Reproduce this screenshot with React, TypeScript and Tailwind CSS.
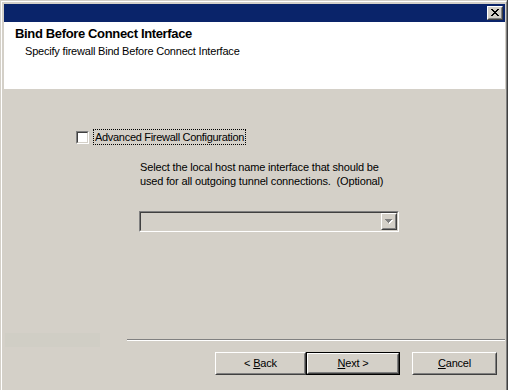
import React from 'react';

const raised = 'border border-t-white border-l-white border-b-[#404040] border-r-[#404040]';
const raisedInner = 'border border-t-[#d4d0c8] border-l-[#d4d0c8] border-b-[#808080] border-r-[#808080]';
const sunken = 'border border-t-[#808080] border-l-[#808080] border-b-white border-r-white';
const sunkenInner = 'border border-t-[#404040] border-l-[#404040] border-b-[#d4d0c8] border-r-[#d4d0c8]';

function CloseButton() {
  return (
    <div className={`w-[16px] h-[14px] bg-[#d4d0c8] ${raised}`}>
      <div className={`w-full h-full flex items-center justify-center ${raisedInner}`}>
        <svg width="8" height="7" viewBox="0 0 8 7" shapeRendering="crispEdges" className="mb-px">
          <path
            d="M0 0h2v1H0zM6 0h2v1H6zM1 1h2v1H1zM5 1h2v1H5zM2 2h4v1H2zM3 3h2v1H3zM2 4h4v1H2zM1 5h2v1H1zM5 5h2v1H5zM0 6h2v1H0zM6 6h2v1H6z"
            fill="#000"
          />
        </svg>
      </div>
    </div>
  );
}

function WizButton({ children, isDefault, width }: { children: React.ReactNode; isDefault?: boolean; width: string }) {
  const face = (
    <div className={`h-full w-full ${raised}`}>
      <div className={`h-full w-full flex items-center justify-center text-[11px] tracking-[-0.2px] ${raisedInner}`}>
        {children}
      </div>
    </div>
  );
  return (
    <div className={`${width} h-[23px] ${isDefault ? 'border border-black' : ''}`}>
      {face}
    </div>
  );
}

export default function App() {
  return (
    <div className="w-[508px] h-[390px] overflow-hidden bg-[#d4d0c8] text-black font-['Liberation_Sans',Arial,sans-serif]">
      <div className="h-full border-r border-[#404040]">
        <div className="h-full pt-px pl-px">
          <div className="h-full border-l border-t border-white border-r border-r-[#808080]">
            <div className="h-full flex flex-col pt-[2px] pl-[2px] pr-px">
              {/* title bar */}
              <div className="h-[18px] bg-[#0a246a] flex items-center justify-end pr-[2px]">
                <CloseButton />
              </div>

              {/* header */}
              <div className="h-[67px] bg-white pl-[11px] pt-[4px]">
                <div className="text-[13px] leading-[16px] font-bold tracking-[-0.35px]">Bind Before Connect Interface</div>
                <div className="mt-[3px] ml-[10px] text-[11px] leading-[13px] tracking-[-0.2px]">
                  Specify firewall Bind Before Connect Interface
                </div>
              </div>

              {/* body */}
              <div className="flex-1 flex flex-col pt-[40px] pb-[15px]">
                <div className="flex items-center ml-[72px] h-[16px]">
                  <div className={`w-[13px] h-[13px] ${sunken}`}>
                    <div className={`w-full h-full bg-white ${sunkenInner}`} />
                  </div>
                  <span className="ml-[4px] h-[16px] px-px border border-dotted border-black text-[11px] leading-[14px] tracking-[-0.3px]">
                    Advanced Firewall Configuration
                  </span>
                </div>

                <div className="ml-[136px] mt-[15px] text-[11px] leading-[14px] tracking-[-0.15px]">
                  <div>Select the local host name interface that should be</div>
                  <div>used for all outgoing tunnel connections.&nbsp; (Optional)</div>
                </div>

                <div className={`ml-[135px] mt-[23px] w-[260px] h-[21px] ${sunken}`}>
                  <div className={`w-full h-full flex justify-end ${sunkenInner}`}>
                    <div className={`w-[16px] h-full ${raised}`}>
                      <div className={`w-full h-full flex items-center justify-center ${raisedInner}`}>
                        <svg width="8" height="5" viewBox="0 0 8 5" shapeRendering="crispEdges">
                          <path d="M1 1h7v1H1zM2 2h5v1H2zM3 3h3v1H3zM4 4h1v1H4z" fill="#fff" />
                          <path d="M0 0h7v1H0zM1 1h5v1H1zM2 2h3v1H2zM3 3h1v1H3z" fill="#808080" />
                        </svg>
                      </div>
                    </div>
                  </div>
                </div>

                <div className="mt-auto flex items-center h-[14px]">
                  <div className="ml-px w-[95px] h-[14px] bg-[#d0cec5]" />
                  <div className="ml-[27px] flex-1 h-[2px] border-t border-[#808080] border-b border-b-white" />
                </div>

                <div className="mt-[5px] flex justify-end pr-[8px]">
                  <WizButton width="w-[91px]">
                    &lt;&nbsp;<span className="underline">B</span>ack
                  </WizButton>
                  <WizButton width="w-[94px]" isDefault>
                    <span className="underline">N</span>ext&nbsp;&gt;
                  </WizButton>
                  <div className="ml-[12px]">
                    <WizButton width="w-[85px]">
                      <span className="underline">C</span>ancel
                    </WizButton>
                  </div>
                </div>
              </div>
            </div>
          </div>
        </div>
      </div>
    </div>
  );
}
